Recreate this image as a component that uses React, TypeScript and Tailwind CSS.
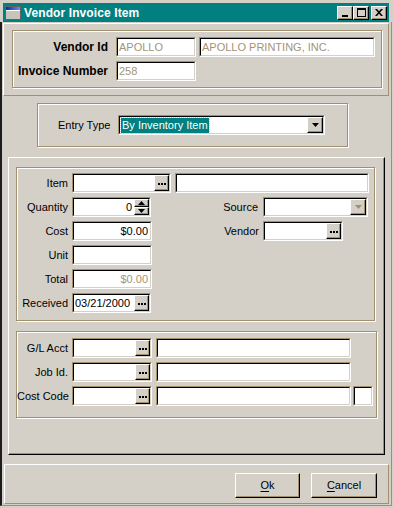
import clsx from "clsx";
import type { ReactNode } from "react";

// sunken edit box, win classic style
function Field({
  w,
  children,
  className,
}: {
  w: string;
  children?: ReactNode;
  className?: string;
}) {
  return (
    <div
      className={clsx(
        "h-[20px] shrink-0 border border-t-[#a0906e] border-l-[#a0906e] border-b-white border-r-white",
        w
      )}
    >
      <div
        className={clsx(
          "h-full flex items-center bg-white border border-t-black border-l-black border-b-[#d4d0c8] border-r-[#d4d0c8] overflow-hidden whitespace-nowrap",
          className
        )}
      >
        {children}
      </div>
    </div>
  );
}

function Raised({ className, children }: { className?: string; children?: ReactNode }) {
  return (
    <div
      className={clsx(
        "bg-[#d4d0c8] border border-t-white border-l-white border-b-black border-r-black shadow-[inset_-1px_-1px_0_#a0906e] flex items-center justify-center shrink-0",
        className
      )}
    >
      {children}
    </div>
  );
}

function Dots() {
  return (
    <Raised className="ml-auto h-full w-[15px] gap-[1px] pt-[2px]">
      <span className="w-[2px] h-[2px] bg-black" />
      <span className="w-[2px] h-[2px] bg-black" />
      <span className="w-[2px] h-[2px] bg-black" />
    </Raised>
  );
}

function DropBtn({ disabled }: { disabled?: boolean }) {
  return (
    <Raised className="ml-auto h-full w-[16px]">
      <svg width="7" height="4" viewBox="0 0 7 4">
        <path d="M0 0h7L3.5 4z" fill={disabled ? "#a0906e" : "#000"} />
      </svg>
    </Raised>
  );
}

function Spin() {
  return (
    <div className="h-full w-[15px] flex flex-col shrink-0">
      <Raised className="flex-1">
        <svg width="7" height="4" viewBox="0 0 7 4">
          <path d="M3.5 0L7 4H0z" fill="#000" />
        </svg>
      </Raised>
      <Raised className="flex-1">
        <svg width="7" height="4" viewBox="0 0 7 4">
          <path d="M0 0h7L3.5 4z" fill="#000" />
        </svg>
      </Raised>
    </div>
  );
}

function Label({ children, className }: { children: ReactNode; className?: string }) {
  return <div className={clsx("text-right shrink-0 whitespace-nowrap", className)}>{children}</div>;
}

function WinIcon() {
  return (
    <svg width="16" height="14" viewBox="0 0 16 14" className="ml-[2px] shrink-0">
      <defs>
        <linearGradient id="cap" x1="0" x2="1" y1="0" y2="0">
          <stop offset="0" stopColor="#1028a0" />
          <stop offset="1" stopColor="#6c8ce8" />
        </linearGradient>
      </defs>
      <rect x="0.5" y="0.5" width="15" height="13" fill="#d4d0c8" stroke="#606060" />
      <rect x="1" y="1" width="14" height="3" fill="url(#cap)" />
      <rect x="1" y="4" width="14" height="1" fill="#ffffff" />
      <rect x="1" y="5" width="14" height="8" fill="#c8c4bc" />
    </svg>
  );
}

function CapBtn({ children, className }: { children: ReactNode; className?: string }) {
  return <Raised className={clsx("w-[16px] h-[14px]", className)}>{children}</Raised>;
}

function Etched({ className, children }: { className?: string; children?: ReactNode }) {
  return (
    <div
      className={clsx(
        "shrink-0 border border-[#a0906e] shadow-[inset_1px_1px_0_#ffffff,1px_1px_0_#ffffff]",
        className
      )}
    >
      {children}
    </div>
  );
}

export default function App() {
  return (
    <div className="w-[393px] h-[508px] bg-[#d4d0c8] flex flex-col overflow-hidden font-['Liberation_Sans',Arial,sans-serif] text-[11px] text-black leading-none select-none">
      {/* title bar */}
      <div className="mt-[3px] ml-[3px] w-[386px] h-[19px] shrink-0 bg-[#008080] flex items-center">
        <WinIcon />
        <span className="ml-[3px] text-white font-bold text-[12px] tracking-[0.1px]">Vendor Invoice Item</span>
        <div className="ml-auto mr-[2px] flex items-center">
          <CapBtn>
            <svg width="8" height="8" viewBox="0 0 8 8">
              <rect x="1" y="6" width="6" height="2" fill="#000" />
            </svg>
          </CapBtn>
          <CapBtn>
            <svg width="9" height="9" viewBox="0 0 9 9">
              <path d="M0 0h9v9H0z M1 2v6h7V2z" fill="#000" fillRule="evenodd" />
            </svg>
          </CapBtn>
          <CapBtn className="ml-[2px]">
            <svg width="8" height="7" viewBox="0 0 8 7">
              <path d="M0 0h2l2 2.3L6 0h2L5 3.5 8 7H6L4 4.7 2 7H0l3-3.5z" fill="#000" />
            </svg>
          </CapBtn>
        </div>
      </div>

      {/* window body */}
      <div className="flex-1 flex flex-col border-l-2 border-l-[#1c1c1c] pl-[1px] pr-[2px] mr-[1px] border-r border-r-[#a0906e] border-b border-b-[#a0906e] mb-[2px]">
        {/* header */}
        <div className="mt-[1px] h-[73px] shrink-0 border border-t-white border-l-white border-b-[#a0906e] border-r-[#a0906e]">
          <Etched className="ml-[8px] mt-[6px] w-[370px] h-[58px] pt-[6px] flex flex-col gap-[4px]">
            <div className="flex items-center">
              <Label className="w-[95px] font-bold text-[12px]">Vendor Id</Label>
              <Field w="w-[80px] ml-[8px]" className="pl-[1px] text-[#a39477]">
                APOLLO
              </Field>
              <Field w="w-[176px] ml-[3px]" className="pl-[1px] text-[#a39477]">
                APOLLO PRINTING, INC.
              </Field>
            </div>
            <div className="flex items-center">
              <Label className="w-[95px] font-bold text-[12px]">Invoice Number</Label>
              <Field w="w-[80px] ml-[8px]" className="pl-[1px] text-[#a39477]">
                258
              </Field>
            </div>
          </Etched>
        </div>

        {/* entry type */}
        <Etched className="ml-[34px] mt-[7px] w-[311px] h-[44px] pl-[20px] flex items-center">
          <div className="w-[60px] shrink-0">Entry Type</div>
          <Field w="w-[207px]" className="pl-[1px]">
            <span className="bg-[#008080] text-white px-[1px] py-[2px] outline outline-1 outline-dotted outline-[#d4d0c8]">
              By Inventory Item
            </span>
            <DropBtn />
          </Field>
        </Etched>

        {/* detail panel */}
        <div className="ml-[5px] mt-[10px] w-[377px] h-[298px] shrink-0 border border-t-white border-l-white border-b-black border-r-black shadow-[inset_-1px_-1px_0_#a0906e]">
          <Etched className="ml-[7px] mt-[9px] w-[359px] h-[154px] pt-[5px] flex flex-col gap-[4px]">
            <div className="flex items-center">
              <Label className="w-[51px]">Item</Label>
              <Field w="w-[99px] ml-[4px]">
                <Dots />
              </Field>
              <Field w="w-[194px] ml-[4px]" />
            </div>
            <div className="flex items-center">
              <div className="w-[183px] flex items-center shrink-0">
                <Label className="w-[51px]">Quantity</Label>
                <Field w="w-[79px] ml-[4px]">
                  <span className="flex-1 text-right pr-[2px]">0</span>
                  <Spin />
                </Field>
              </div>
              <Label className="w-[58px]">Source</Label>
              <Field w="w-[105px] ml-[5px]">
                <DropBtn disabled />
              </Field>
            </div>
            <div className="flex items-center">
              <div className="w-[183px] flex items-center shrink-0">
                <Label className="w-[51px]">Cost</Label>
                <Field w="w-[80px] ml-[4px]" className="justify-end pr-[2px]">
                  $0.00
                </Field>
              </div>
              <Label className="w-[59px]">Vendor</Label>
              <Field w="w-[80px] ml-[4px]">
                <Dots />
              </Field>
            </div>
            <div className="flex items-center">
              <Label className="w-[51px]">Unit</Label>
              <Field w="w-[80px] ml-[4px]" />
            </div>
            <div className="flex items-center">
              <Label className="w-[51px]">Total</Label>
              <Field w="w-[80px] ml-[4px]" className="justify-end pr-[2px] text-[#a39477]">
                $0.00
              </Field>
            </div>
            <div className="flex items-center">
              <Label className="w-[51px]">Received</Label>
              <Field w="w-[79px] ml-[4px]" className="pl-[1px]">
                <span>03/21/2000</span>
                <Dots />
              </Field>
            </div>
          </Etched>

          <Etched className="ml-[7px] mt-[10px] w-[361px] h-[87px] pt-[6px] flex flex-col gap-[4px]">
            <div className="flex items-center">
              <Label className="w-[51px]">G/L Acct</Label>
              <Field w="w-[80px] ml-[4px]">
                <Dots />
              </Field>
              <Field w="w-[195px] ml-[4px]" />
            </div>
            <div className="flex items-center">
              <Label className="w-[51px]">Job Id.</Label>
              <Field w="w-[80px] ml-[4px]">
                <Dots />
              </Field>
              <Field w="w-[195px] ml-[4px]" />
            </div>
            <div className="flex items-center">
              <Label className="w-[51px]">Cost Code</Label>
              <Field w="w-[80px] ml-[4px]">
                <Dots />
              </Field>
              <Field w="w-[195px] ml-[4px]" />
              <Field w="w-[20px] ml-[2px]" />
            </div>
          </Etched>
        </div>

        {/* footer */}
        <div className="ml-[1px] mt-[9px] w-[385px] h-[40px] shrink-0 border border-t-white border-l-white border-b-[#a0906e] border-r-[#a0906e] flex justify-end items-start pt-[8px] pr-[11px] gap-[11px]">
          <Raised className="w-[65px] h-[25px]">
            <span>
              <span className="underline underline-offset-2">O</span>k
            </span>
          </Raised>
          <Raised className="w-[66px] h-[25px]">
            <span>
              <span className="underline underline-offset-2">C</span>ancel
            </span>
          </Raised>
        </div>
      </div>
    </div>
  );
}
